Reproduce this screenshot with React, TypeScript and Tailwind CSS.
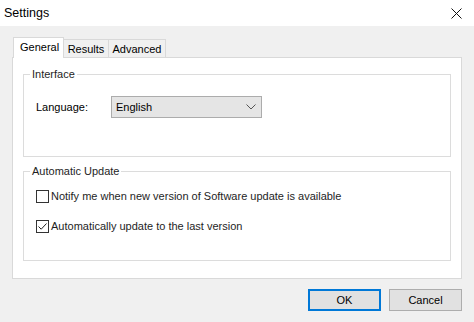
import React from "react";

const TABS = [
  { label: "General", w: "w-[51px]" },
  { label: "Results", w: "w-[46px]" },
  { label: "Advanced", w: "w-[58px]" },
];

function CheckBox({ checked }: { checked?: boolean }) {
  return (
    <span className="flex h-[13px] w-[13px] shrink-0 items-center justify-center border border-[#333333] bg-white">
      {checked && (
        <svg width="11" height="11" viewBox="0 0 11 11">
          <path d="M1.5 5.5 L4.2 8.2 L9.5 2.5" fill="none" stroke="#222" strokeWidth="1" />
        </svg>
      )}
    </span>
  );
}

function GroupBox({
  title,
  className,
  children,
}: {
  title: string;
  className: string;
  children: React.ReactNode;
}) {
  return (
    <fieldset className={`border border-[#dcdcdc] ${className}`}>
      <legend className="ml-[6px] px-[2px] leading-[16px] text-[#1e1e1e]">{title}</legend>
      {children}
    </fieldset>
  );
}

export default function App() {
  return (
    <div
      className="flex h-[322px] w-[474px] flex-col overflow-hidden bg-[#f0f0f0] text-[11px] text-black"
      style={{ fontFamily: '"Liberation Sans", Arial, sans-serif' }}
    >
      {/* title bar */}
      <div className="flex h-[26px] items-center justify-between bg-white pl-[4px] pr-[12px]">
        <span className="text-[12.5px] text-black">Settings</span>
        <svg width="11" height="11" viewBox="0 0 11 11">
          <path d="M0.5 0.5 L10.5 10.5 M10.5 0.5 L0.5 10.5" stroke="#111" strokeWidth="1" />
        </svg>
      </div>

      <div className="flex flex-1 flex-col px-[12px] pt-[11px]">
        {/* tabs */}
        <div className="relative z-10 flex items-end pl-[1px]">
          {TABS.map((t, i) =>
            i === 0 ? (
              <div
                key={t.label}
                className={`${t.w} -mb-px flex h-[21px] items-center border border-b-0 border-[#d9d9d9] bg-white pl-[6px] pb-[1px]`}
              >
                {t.label}
              </div>
            ) : (
              <div
                key={t.label}
                className={`${t.w} -ml-px flex h-[18px] items-center justify-center border border-b-0 border-[#d9d9d9] bg-[#f0f0f0] pt-[2px]`}
              >
                {t.label}
              </div>
            )
          )}
        </div>

        {/* panel */}
        <div className="flex h-[222px] flex-col border border-[#d9d9d9] bg-white px-[10px] pt-[8px]">
          <GroupBox title="Interface" className="h-[91px]">
            <div className="flex items-center pl-[12px] pt-[14px]">
              <span className="w-[75px]">Language:</span>
              <div className="flex h-[22px] w-[151px] items-center justify-between border border-[#acacac] bg-[#e5e5e5] pl-[4px] pr-[5px]">
                <span>English</span>
                <svg width="10" height="6" viewBox="0 0 10 6">
                  <path d="M0.5 0.5 L5 5 L9.5 0.5" fill="none" stroke="#555" strokeWidth="1" />
                </svg>
              </div>
            </div>
          </GroupBox>

          <GroupBox title="Automatic Update" className="mt-[6px] h-[98px]">
            <div className="flex flex-col gap-[15px] pl-[12px] pt-[10px]">
              <label className="flex h-[15px] items-center gap-[2px]">
                <CheckBox />
                <span className="text-[#1e1e1e]">Notify me when new version of Software update is available</span>
              </label>
              <label className="flex h-[15px] items-center gap-[2px]">
                <CheckBox checked />
                <span className="text-[#1e1e1e]">Automatically update to the last version</span>
              </label>
            </div>
          </GroupBox>
        </div>

        {/* buttons */}
        <div className="flex justify-end gap-[8px] pt-[10px]">
          <button
            type="button"
            className="h-[22px] w-[73px] border-2 border-[#0078d7] bg-[#e1e1e1] leading-none"
          >
            OK
          </button>
          <button
            type="button"
            className="h-[22px] w-[73px] border border-[#adadad] bg-[#e1e1e1] leading-none"
          >
            Cancel
          </button>
        </div>
      </div>
    </div>
  );
}
